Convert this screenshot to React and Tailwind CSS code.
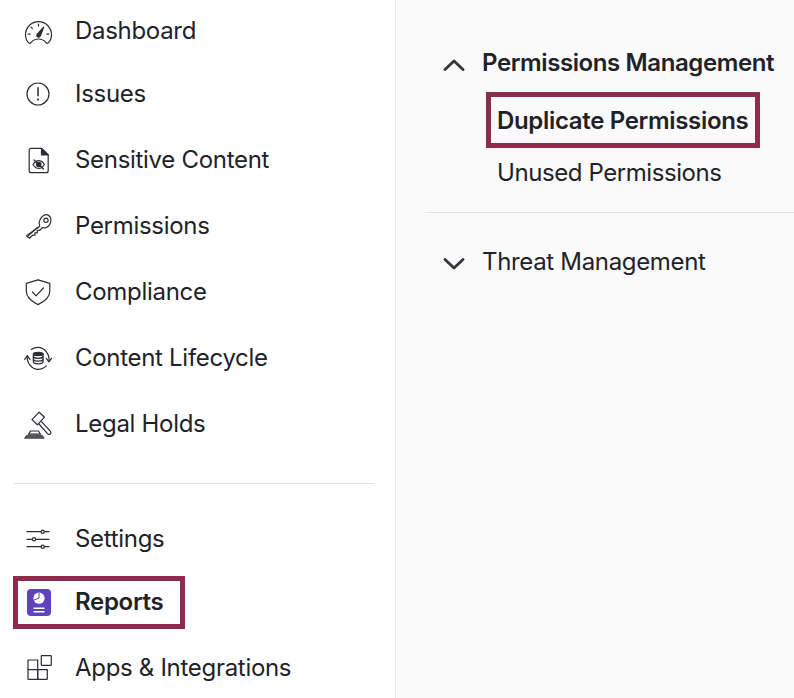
const S = "#2a2d33";
function Ico({ children }) {
  return (
    <svg width={30} height={30} viewBox="0 0 30 30" fill="none" stroke={S} strokeWidth="1.2" strokeLinecap="round" strokeLinejoin="round" className="shrink-0">
      {children}
    </svg>
  );
}
const Gauge = () => (
  <Ico>
    <g transform="translate(0 2.6)">
      <path d="M6 24.5 C3.8 22.5 2.5 19.8 2.5 16.5 C2.5 9 8.3 3 15.5 3 C22.7 3 28.5 9 28.5 16.5 C28.5 19.8 27.2 22.5 25 24.5 C24 25.1 23.3 24.5 22.8 23.8 C21 21.5 18.4 20.4 15.5 20.4 C12.6 20.4 10 21.5 8.2 23.8 C7.7 24.5 7 25.1 6 24.5 Z" />
      <path d="M15.5 5.5V7.5M8 8.5L9.4 10M5.2 15.5H7.2M23.8 15.5H25.8" />
      <path d="M14.6 15.3L20.6 8.6L17.5 17Z" fill={S} />
      <circle cx="15.5" cy="16.8" r="1.7" fill={S} />
    </g>
  </Ico>
);
const Alert = () => (
  <Ico>
    <circle cx="15" cy="15" r="11" />
    <path d="M15 8.8V16.8" strokeWidth="1.5" />
    <circle cx="15" cy="20.6" r="0.5" fill={S} />
  </Ico>
);
const FileEye = () => (
  <Ico>
    <path d="M8.2 3.3H18.5L25.2 10V25.7C25.2 26.8 24.3 27.7 23.2 27.7H8.2C7.1 27.7 6.2 26.8 6.2 25.7V5.3C6.2 4.2 7.1 3.3 8.2 3.3Z" />
    <path d="M18.5 3.3L25.2 10H18.5Z" fill={S} />
    <path d="M10 19.5C11.6 17 13.4 15.6 15.7 15.6C18 15.6 19.8 17 21.4 19.5C19.8 22 18 23.4 15.7 23.4C13.4 23.4 11.6 22 10 19.5Z" />
    <circle cx="15.7" cy="19.5" r="2.2" fill={S} />
    <path d="M11 15L20.5 24" strokeWidth="1.3" />
  </Ico>
);
const Key = () => (
  <Ico>
    <path d="M16.8 15.3C15.8 13.4 15.9 10.9 16.9 8.9C18.4 5.2 22.4 2.6 25.2 4.1C28.4 5.7 28.6 10.2 26.8 13.4C25 16.4 21.6 17.6 19.2 16.6L16.8 19.3H14.3V21.8H12V24.2H9.6L6.4 27.2L3.6 24.8Z" />
    <circle cx="23" cy="9.2" r="2.1" />
    <path d="M5.4 24.6L14.5 16.5" />
  </Ico>
);
const Shield = () => (
  <Ico>
    <path d="M15 2.9L26.8 6.4V14.1C26.8 20.1 21.8 24.6 15 27.6C9.3 24.9 3.3 20.3 3.3 14.1V6.4Z" />
    <path d="M9.5 15L13 18.8L20.5 11" />
  </Ico>
);
const Lifecycle = () => (
  <Ico>
    <path d="M4.3 13.2C3.6 19.5 8.6 26.3 15 26.3C18.2 26.3 21.1 25 23.3 22.8" />
    <path d="M26 18.2C26.7 11.2 21.5 4.3 15 4.3C12.6 4.3 10.2 5 8.3 6.4" />
    <path d="M1.7 16.3L4.3 12.7L7 16.3" />
    <path d="M23.3 15.3L26 18.8L28.5 15.3" />
    <ellipse cx="15.2" cy="11" rx="4.8" ry="1.6" fill={S} />
    <path d="M10.4 11V19C10.4 20.2 12.4 20.8 15.2 20.8C18 20.8 20 20.2 20 19V11" strokeWidth="1.3" />
    <path d="M10.4 14C11.2 15 13.2 15.3 15.2 15.3C17.2 15.3 19.2 15 20 14M10.4 16.8C11.2 17.8 13.2 18.1 15.2 18.1C17.2 18.1 19.2 17.8 20 16.8" strokeWidth="1.3" />
  </Ico>
);
const Gavel = () => (
  <Ico>
    <path d="M9 10.6L16.2 3.2L21.5 8.2L14.4 15.8Z" />
    <path d="M18.8 12.8L27.5 22.3C28.3 23.3 28 24.3 27.2 25C26.5 25.6 25.5 25.6 24.7 24.8L16 15" />
    <path d="M5.5 25.2L7.5 22H15.5L17.5 25.2Z" />
    <path d="M1.8 29L3.4 26.4H19.4L21 29Z" fill="#55585e" stroke={S} strokeWidth="0.8" />
  </Ico>
);
const Sliders = () => (
  <Ico>
    <path d="M4 7.7H18M21.4 7.7H26M4 15.3H9.4M12.6 15.3H26M4 22.7H18M21.4 22.7H26" strokeWidth="1.3" />
    <circle cx="19.7" cy="7.7" r="1.6" />
    <circle cx="11" cy="15.3" r="1.6" />
    <circle cx="19.7" cy="22.7" r="1.6" />
  </Ico>
);
const Report = () => (
  <svg width="24" height="27" viewBox="0 0 24 27" fill="none" className="shrink-0">
    <rect width="24" height="27" rx="4" fill="#6041c2" />
    <circle cx="12" cy="9.2" r="5.6" fill="#fff" />
    <path d="M12 9.2V3.6M12 9.2L7 11" stroke="#6041c2" strokeWidth="1" />
    <path d="M6.5 19.2H17.5M6.5 22.7H17.5" stroke="#fff" strokeWidth="1.6" />
  </svg>
);
const Apps = () => (
  <Ico>
    <path d="M5 7H14.7V26.3H5.6C5.3 26.3 5 26 5 25.7Z" />
    <path d="M5 16.7H24.3V25.7C24.3 26 24 26.3 23.7 26.3H14.7V16.7" />
    <rect x="18.3" y="2.7" width="10" height="9.6" rx="0.6" />
  </Ico>
);
const Row = ({ icon, label, className = "" }) => (
  <div className={"flex h-[42px] items-center pl-[23px] " + className}>
    <div className="flex w-[52px] shrink-0">{icon}</div>
    <span className="text-[24px] leading-none tracking-[-0.3px] text-[#1f2228]">{label}</span>
  </div>
);
const Chevron = ({ up }) => (
  <svg width="22" height="12" viewBox="0 0 22 12" fill="none" stroke="#33363c" strokeWidth="2.8" strokeLinecap="round" strokeLinejoin="round" className="shrink-0">
    <path d={up ? "M2 10.5L11 2L20 10.5" : "M2 1.5L11 10L20 1.5"} />
  </svg>
);
export default function App() {
  return (
    <div className="flex h-[698px] w-[794px] overflow-hidden bg-white font-['Inter',sans-serif]">
      <aside className="w-[395px] shrink-0 pt-[10px]">
        <Row icon={<Gauge />} label="Dashboard" />
        <Row icon={<Alert />} label="Issues" className="mt-[21px]" />
        <Row icon={<FileEye />} label="Sensitive Content" className="mt-[24px]" />
        <Row icon={<Key />} label="Permissions" className="mt-[24px]" />
        <Row icon={<Shield />} label="Compliance" className="mt-[24px]" />
        <Row icon={<Lifecycle />} label="Content Lifecycle" className="mt-[24px]" />
        <Row icon={<Gavel />} label="Legal Holds" className="mt-[24px]" />
        <div className="mx-[14px] mt-[38px] h-px w-[360px] bg-[#e3e3e3]" />
        <Row icon={<Sliders />} label="Settings" className="mt-[34px]" />
        <div className="ml-[13px] mt-[16px] flex h-[53px] w-[172px] items-center border-[5px] border-[#8e2c50] pl-[9px]">
          <div className="flex w-[48px] shrink-0"><Report /></div>
          <span className="pb-[2px] text-[24px] font-semibold leading-none tracking-[-0.3px] text-[#1f2228]">Reports</span>
        </div>
        <Row icon={<Apps />} label="Apps & Integrations" className="mt-[18px]" />
      </aside>
      <main className="flex-1 border-l border-[#e5e5e5] bg-[#fafafa] pt-[42px]">
        <div className="flex h-[42px] items-center pl-[47px]">
          <div className="flex w-[39px] shrink-0 pt-[4px]"><Chevron up /></div>
          <span className="whitespace-nowrap text-[24px] font-semibold leading-none tracking-[-0.4px] text-[#1f2228]">Permissions Management</span>
        </div>
        <div className="ml-[90px] mt-[8px] flex h-[56px] w-[274px] items-center border-[5px] border-[#8e2c50] pl-[6px]">
          <span className="whitespace-nowrap pt-[2px] text-[24px] font-semibold leading-none tracking-[-0.33px] text-[#1f2228]">Duplicate Permissions</span>
        </div>
        <div className="ml-[101px] mt-[4px] flex h-[42px] items-center">
          <span className="whitespace-nowrap text-[24px] leading-none tracking-[-0.42px] text-[#1f2228]">Unused Permissions</span>
        </div>
        <div className="ml-[29px] mt-[18px] h-px bg-[#e3e3e3]" />
        <div className="mt-[28px] flex h-[42px] items-center pl-[47px]">
          <div className="flex w-[39px] shrink-0 pt-[4px]"><Chevron /></div>
          <span className="whitespace-nowrap text-[24px] leading-none tracking-[-0.33px] text-[#1f2228]">Threat Management</span>
        </div>
      </main>
    </div>
  );
}
